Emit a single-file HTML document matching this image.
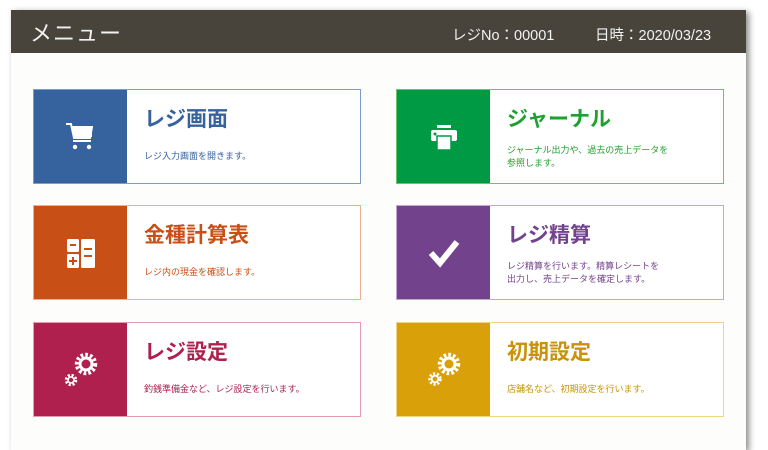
<!DOCTYPE html>
<html><head><meta charset="utf-8"><style>
*{margin:0;padding:0;box-sizing:border-box}
body{width:768px;height:435px;background:#fff;position:relative;overflow:hidden;font-family:"Liberation Sans","Noto Sans CJK JP",sans-serif}
.panel{position:absolute;left:11px;top:10px;width:735px;height:440px;background:#fdfdfb;box-shadow:3px 2px 6px rgba(0,0,0,.45)}
.hdr{position:absolute;left:0;top:0;width:735px;height:43px;background:#48443b;color:#f2f2f2}
.hdr .t{position:absolute;left:19px;top:6px;font-size:22px;letter-spacing:1px}
.hdr .r{position:absolute;top:14px;font-size:14.5px}
.card{position:absolute;width:328px;height:95px;background:#fff;border:1px solid}
.ic{position:absolute;left:0;top:0;width:93px;height:100%;display:flex;align-items:center;justify-content:center}
.ti{position:absolute;left:110px;top:13px;font-size:21px;font-weight:bold}
.de{position:absolute;left:110px;font-size:9px;line-height:13px}
</style></head><body>
<div class="panel">
<div class="hdr"><div class="t">メニュー</div><div class="r" style="left:441px">レジNo：00001</div><div class="r" style="left:584px">日時：2020/03/23</div></div>
</div>

<div class="card" style="left:33px;top:89px;border-color:#7f9cc8">
<div class="ic" style="background:#36629e"><svg width="34" height="32" viewBox="0 0 34 32"><path d="M2 3h5l3 14h16l2-11H8" fill="none" stroke="#fff" stroke-width="2"/><rect x="9" y="7" width="19" height="9" fill="#fff"/><path d="M9 20h18" stroke="#fff" stroke-width="2"/><circle cx="11" cy="26" r="2.2" fill="#fff"/><circle cx="25" cy="26" r="2.2" fill="#fff"/></svg></div>
<div class="ti" style="color:#36629e">レジ画面</div><div class="de" style="top:60px;color:#36629e">レジ入力画面を開きます。</div></div>

<div class="card" style="left:396px;top:89px;border-color:#6cc46a">
<div class="ic" style="background:#009a44"><svg width="36" height="32" viewBox="0 0 36 32"><rect x="11" y="4" width="14" height="3" fill="#fff"/><rect x="5" y="9" width="26" height="11" rx="2" fill="#fff"/><circle cx="9" cy="13" r="1.5" fill="#009a44"/><rect x="11" y="15" width="14" height="14" fill="#fff" stroke="#009a44" stroke-width="1.5"/></svg></div>
<div class="ti" style="color:#20a030">ジャーナル</div><div class="de" style="top:54px;color:#20a030">ジャーナル出力や、過去の売上データを<br>参照します。</div></div>

<div class="card" style="left:33px;top:205px;border-color:#efae90">
<div class="ic" style="background:#c85017"><svg width="34" height="34" viewBox="0 0 34 34"><rect x="3" y="3" width="12" height="13" rx="1.5" fill="#fff"/><rect x="17" y="3" width="14" height="29" rx="1.5" fill="#fff"/><rect x="3" y="18" width="12" height="14" rx="1.5" fill="#fff"/><path d="M6 9h6M20 13h8M20 20h8M9 21v8M5 25h8" stroke="#c85017" stroke-width="2"/></svg></div>
<div class="ti" style="color:#c85017">金種計算表</div><div class="de" style="top:60px;color:#c85017">レジ内の現金を確認します。</div></div>

<div class="card" style="left:396px;top:205px;border-color:#c3a8d2">
<div class="ic" style="background:#73428c"><svg width="34" height="30" viewBox="0 0 34 30"><path d="M4 15l9 10L30 4" fill="none" stroke="#fff" stroke-width="6"/></svg></div>
<div class="ti" style="color:#73428c">レジ精算</div><div class="de" style="top:54px;color:#73428c">レジ精算を行います。精算レシートを<br>出力し、売上データを確定します。</div></div>

<div class="card" style="left:33px;top:322px;border-color:#e49ab4">
<div class="ic" style="background:#b0204f"><svg width="44" height="44" viewBox="0 0 44 44"><circle cx="27" cy="16" r="9" fill="none" stroke="#fff" stroke-width="4.5" stroke-dasharray="2.6 2"/><circle cx="27" cy="16" r="6" fill="none" stroke="#fff" stroke-width="3"/><circle cx="12" cy="32" r="4.5" fill="none" stroke="#fff" stroke-width="3.5" stroke-dasharray="2 1.6"/><circle cx="12" cy="32" r="3" fill="none" stroke="#fff" stroke-width="1.6"/></svg></div>
<div class="ti" style="color:#b0204f">レジ設定</div><div class="de" style="top:60px;color:#b0204f">釣銭準備金など、レジ設定を行います。</div></div>

<div class="card" style="left:396px;top:322px;border-color:#f0d582">
<div class="ic" style="background:#d9a00a"><svg width="44" height="44" viewBox="0 0 44 44"><circle cx="27" cy="16" r="9" fill="none" stroke="#fff" stroke-width="4.5" stroke-dasharray="2.6 2"/><circle cx="27" cy="16" r="6" fill="none" stroke="#fff" stroke-width="3"/><circle cx="13" cy="31" r="5" fill="none" stroke="#fff" stroke-width="3.5" stroke-dasharray="2 1.6"/><circle cx="13" cy="31" r="3.3" fill="none" stroke="#fff" stroke-width="1.8"/></svg></div>
<div class="ti" style="color:#c99208">初期設定</div><div class="de" style="top:60px;color:#c99208">店舗名など、初期設定を行います。</div></div>
</body></html>
